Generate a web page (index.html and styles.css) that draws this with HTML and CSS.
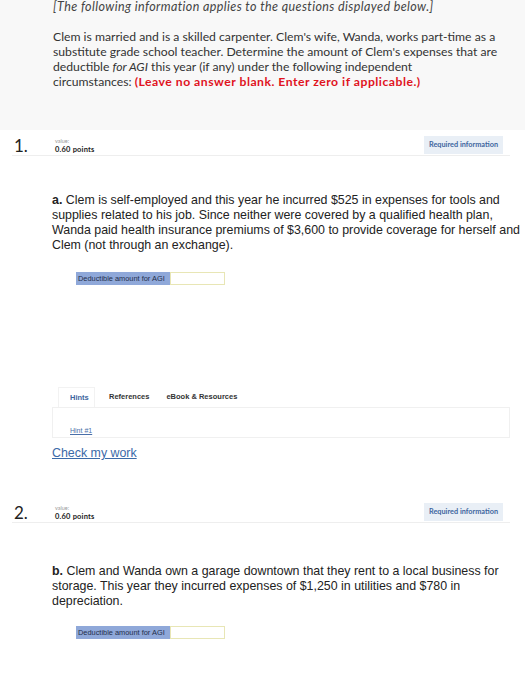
FILE: index.html
```html
<!DOCTYPE html>
<html>
<head>
<meta charset="utf-8">
<link rel="stylesheet" href="styles.css">
</head>
<body>
<div class="intro">
  <p class="note">[The following information applies to the questions displayed below.]</p>
  <p class="lead">Clem is married and is a skilled carpenter. Clem's wife, Wanda, works part-time as a substitute grade school teacher. Determine the amount of Clem's expenses that are deductible <i>for AGI</i> this year (if any) under the following independent<br>circumstances: <b class="warn">(Leave no answer blank. Enter zero if applicable.)</b></p>
</div>

<div class="question">
  <div class="qhead">
    <div class="qnum">1.</div>
    <div class="qval"><span class="vlabel">value:</span><span class="vpts">0.60 points</span></div>
    <div class="req">Required information</div>
  </div>
  <div class="qbody">
    <p class="qtext"><b>a.</b> Clem is self-employed and this year he incurred $525 in expenses for tools and supplies related to his job. Since neither were covered by a qualified health plan, Wanda paid health insurance premiums of $3,600 to provide coverage for herself and Clem (not through an exchange).</p>
    <div class="answer"><span class="alabel">Deductible amount for AGI</span><span class="ainput"></span></div>
    <div class="tabs">
      <span class="tab active">Hints</span>
      <span class="tab">References</span>
      <span class="tab">eBook &amp; Resources</span>
    </div>
    <div class="panel"><a class="hint">Hint #1</a></div>
    <a class="check">Check my work</a>
  </div>
</div>

<div class="question q2">
  <div class="qhead">
    <div class="qnum">2.</div>
    <div class="qval"><span class="vlabel">value:</span><span class="vpts">0.60 points</span></div>
    <div class="req">Required information</div>
  </div>
  <div class="qbody">
    <p class="qtext"><b>b.</b> Clem and Wanda own a garage downtown that they rent to a local business for storage. This year they incurred expenses of $1,250 in utilities and $780 in depreciation.</p>
    <div class="answer"><span class="alabel">Deductible amount for AGI</span><span class="ainput"></span></div>
  </div>
</div>
</body>
</html>
```
FILE: styles.css
```css
html, body {
  margin: 0;
  padding: 0;
  background: #ffffff;
}
body {
  width: 525px;
  font-family: "Lato", "Liberation Sans", sans-serif;
  color: #333333;
}
p { margin: 0; }

.intro {
  background: #f8f8f8;
  padding: 0 20px 0 53px;
  height: 131px;
  box-sizing: border-box;
}
.note {
  font-style: italic;
  font-size: 12.5px;
  line-height: 15px;
  letter-spacing: 0.4px;
  color: #444;
  margin-top: -1px;
}
.lead {
  font-size: 12.2px;
  line-height: 15px;
  margin-top: 15px;
  color: #333;
}
.warn {
  color: #e0131e;
  letter-spacing: 0.5px;
}

.question {
  padding: 0 15px 0 12px;
}
.qhead {
  display: flex;
  align-items: flex-start;
  border-bottom: 1px solid #eeeeee;
  height: 26px;
  box-sizing: border-box;
  padding-top: 7px;
}
.qnum {
  width: 41px;
  font-family: "Lato", sans-serif;
  font-size: 17px;
  line-height: 18px;
  color: #222;
  padding-left: 2px;
}
.qval {
  display: flex;
  flex-direction: column;
  flex: 1;
  padding-top: 1px;
}
.vlabel {
  font-size: 5.5px;
  line-height: 7px;
  color: #999;
}
.vpts {
  font-size: 7.5px;
  line-height: 10px;
  font-weight: bold;
  color: #222;
  letter-spacing: 0.2px;
}
.req {
  background: #e9eff6;
  color: #3d659e;
  font-size: 7.3px;
  font-weight: bold;
  padding: 5px 5px;
  line-height: 8px;
  margin-top: -1px;
  margin-right: 7px;
}

.qbody {
  padding-left: 40px;
}
.qtext {
  font-family: "Liberation Sans", Arial, sans-serif;
  font-size: 12.4px;
  line-height: 15px;
  color: #222;
  margin-top: 37px;
  margin-right: -12px;
}
.answer {
  display: flex;
  margin: 19px 0 0 24px;
  height: 13px;
}
.alabel {
  background: #8fa8d9;
  color: #1f2d4a;
  font-family: "Liberation Sans", Arial, sans-serif;
  font-size: 7.4px;
  line-height: 13px;
  width: 94px;
  padding-left: 2px;
  box-sizing: border-box;
  white-space: nowrap;
}
.ainput {
  width: 55px;
  height: 13px;
  box-sizing: border-box;
  border: 1px solid #e8e6b5;
  background: #fff;
}

.tabs {
  display: flex;
  margin: 102px 0 0 6px;
  height: 20px;
  font-family: "Liberation Sans", Arial, sans-serif;
  font-size: 7.5px;
  font-weight: bold;
}
.tab {
  padding: 0 0 0 14px;
  line-height: 20px;
  color: #333;
}
.tab + .tab + .tab { padding-left: 17px; }
.tab.active {
  color: #3d659e;
  background: #fff;
  border: 1px solid #f2f2f2;
  border-bottom: none;
  padding: 0 0 0 11px;
  width: 37px;
  box-sizing: border-box;
}
.panel {
  border: 1px solid #f0f0f0;
  height: 31px;
  box-sizing: border-box;
  padding: 9px 0 0 17px;
}
.hint {
  font-family: "Liberation Sans", Arial, sans-serif;
  font-size: 7px;
  color: #4a6fa8;
  text-decoration: underline;
}
.check {
  display: inline-block;
  margin-top: 7px;
  font-family: "Liberation Sans", Arial, sans-serif;
  font-size: 12.4px;
  line-height: 16px;
  color: #3b6aa8;
  text-decoration: underline;
}

.q2 { margin-top: 36px; }
.q2 .qtext { margin-top: 41px; }
.q2 .answer { margin-top: 17px; }
```
